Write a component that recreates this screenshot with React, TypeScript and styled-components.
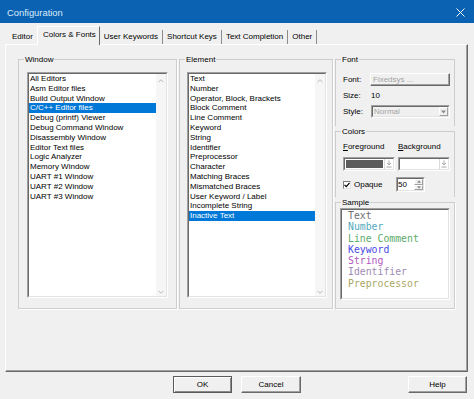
import React from "react";
import styled, { createGlobalStyle } from "styled-components";

const GlobalStyle = createGlobalStyle`
  html, body {
    margin: 0;
    padding: 0;
    background: #f0f0f0;
  }
  body {
    font-family: "Liberation Sans", Arial, sans-serif;
    font-size: 8px;
    color: #000;
  }
  * {
    box-sizing: border-box;
  }
`;

const Frame = styled.div`
  width: 474px;
  height: 399px;
  display: flex;
  flex-direction: column;
  background: #f0f0f0;
  overflow: hidden;
`;

const TitleBar = styled.div`
  height: 23px;
  flex: none;
  display: flex;
  align-items: center;
  padding: 1px 9px 0 7px;
  background: #0b62b2;
  color: #dbeafa;
  font-size: 9.4px;
`;

const TitleText = styled.span`
  flex: 1;
`;

const TabStrip = styled.div`
  height: 21px;
  flex: none;
  display: flex;
  align-items: flex-end;
  padding-left: 8px;
`;

const Tab = styled.div<{ $active?: boolean; $sep?: boolean }>`
  height: ${({ $active }) => ($active ? 19 : 14)}px;
  line-height: ${({ $active }) => ($active ? 16 : 13)}px;
  padding: ${({ $active }) => ($active ? "0 3px 0 5px" : "0 4px")};
  white-space: nowrap;
  border-right: ${({ $sep }) => ($sep ? "1px solid #8c8c8c" : "none")};
  ${({ $active }) =>
    $active &&
    `
    position: relative;
    z-index: 1;
    margin-bottom: -1px;
    background: #f0f0f0;
    border-top: 1px solid #fff;
    border-left: 1px solid #fff;
    border-right: 1px solid #696969;
  `}
`;

const Panel = styled.div`
  height: 328px;
  flex: none;
  margin: 0 6px 0 5px;
  padding: 9px 12px 0;
  display: flex;
  align-items: flex-start;
  gap: 2px;
  border: 1px solid;
  border-color: #fff #696969 #696969 #fff;
  box-shadow: inset -1px -1px 0 #a0a0a0;
`;

const Group = styled.fieldset<{ $w?: number; $open?: boolean }>`
  margin: 0;
  padding: 0;
  min-width: 0;
  width: ${({ $w }) => ($w ? `${$w}px` : "auto")};
  border: 1px solid #cdcdcd;
  border-bottom: ${({ $open }) => ($open ? "none" : "1px solid #cdcdcd")};
  box-shadow: ${({ $open }) => ($open ? "none" : "1px 1px 0 #fff")};
`;

const Legend = styled.legend`
  margin-left: 5px;
  padding: 0 1px;
  line-height: 11px;
  font-size: 8px;
`;

const GroupBody = styled.div<{ $pad: string }>`
  padding: ${({ $pad }) => $pad};
`;

const Column = styled.div`
  width: 120px;
  display: flex;
  flex-direction: column;
`;

const Sunken = styled.div<{ $h: number; $w?: number }>`
  height: ${({ $h }) => $h}px;
  width: ${({ $w }) => ($w ? `${$w}px` : "auto")};
  border: 1px solid;
  border-color: #a0a0a0 #fff #fff #a0a0a0;
`;

const Well = styled.div<{ $bg?: string }>`
  height: 100%;
  display: flex;
  border: 1px solid;
  border-color: #696969 #e3e3e3 #e3e3e3 #696969;
  background: ${({ $bg }) => $bg || "#fff"};
`;

const Items = styled.div`
  flex: 1;
  min-width: 0;
`;

const Item = styled.div<{ $sel?: boolean }>`
  height: 9.8px;
  line-height: 9.8px;
  padding-left: 1px;
  white-space: nowrap;
  background: ${({ $sel }) => ($sel ? "#0078d7" : "transparent")};
  color: ${({ $sel }) => ($sel ? "#fff" : "#000")};
`;

const ScrollCol = styled.div`
  width: 10px;
  display: flex;
  flex-direction: column;
  justify-content: space-between;
  align-items: center;
  padding: 4px 0 1px;
  background: #f6f6f6;
`;

const FontGrid = styled.div`
  display: grid;
  grid-template-columns: 28px 1fr;
  grid-auto-rows: 13px;
  row-gap: 3px;
  align-items: center;
`;

const RaisedButton = styled.div<{ $disabled?: boolean }>`
  height: 13px;
  line-height: 11px;
  padding-left: 2px;
  margin-left: -1px;
  color: ${({ $disabled }) => ($disabled ? "#a3a3a3" : "#000")};
  border: 1px solid;
  border-color: #fff #696969 #696969 #fff;
  box-shadow: inset -1px -1px 0 #a0a0a0;
`;

const SelectText = styled.span`
  flex: 1;
  line-height: 9px;
  padding-left: 1px;
  color: #a3a3a3;
`;

const SmallKnob = styled.div`
  width: 9px;
  display: flex;
  align-items: center;
  justify-content: center;
  border: 1px solid;
  border-color: #fff #a0a0a0 #a0a0a0 #fff;
  background: #f0f0f0;
`;

const PairGrid = styled.div<{ $mt: number; $h: number }>`
  display: grid;
  grid-template-columns: 52px 52px;
  column-gap: 3px;
  height: ${({ $h }) => $h}px;
  margin-top: ${({ $mt }) => $mt}px;
  align-items: center;
`;

const Swatch = styled.div<{ $color: string; $dark?: boolean }>`
  width: 37px;
  margin: 1px;
  background: ${({ $color }) => $color};
`;

const PickArrow = styled.div`
  flex: 1;
  display: flex;
  align-items: center;
  justify-content: center;
  border-left: 1px solid #dadada;
`;

const OpaqueRow = styled.div`
  display: flex;
  align-items: center;
  height: 15px;
  margin-top: 6px;
`;

const CheckBox = styled.div`
  width: 8px;
  height: 8px;
  display: flex;
  align-items: center;
  justify-content: center;
  background: #fff;
  border: 1px solid;
  border-color: #808080 #e3e3e3 #e3e3e3 #808080;
`;

const CheckLabel = styled.span`
  margin-left: 3px;
  width: 42px;
`;

const SpinText = styled.span`
  flex: 1;
  line-height: 11px;
`;

const SpinButtons = styled.div`
  width: 9px;
  display: flex;
  flex-direction: column;
`;

const SpinHalf = styled.div`
  flex: 1;
  display: flex;
  align-items: center;
  justify-content: center;
  background: #f0f0f0;
  border: 1px solid;
  border-color: #fff #a0a0a0 #a0a0a0 #fff;
`;

const SampleLines = styled.div`
  padding-left: 6px;
  font-family: "DejaVu Sans Mono", "Liberation Mono", monospace;
  font-size: 9.8px;
`;

const SampleLine = styled.div<{ $color: string }>`
  height: 11.3px;
  line-height: 11.3px;
  color: ${({ $color }) => $color};
  white-space: nowrap;
`;

const ButtonRow = styled.div`
  display: flex;
  margin-top: 4px;
  padding: 0 7px 0 173px;
  gap: 9px;
`;

const DialogButton = styled.div<{ $default?: boolean; $w: number; $push?: boolean }>`
  width: ${({ $w }) => $w}px;
  height: 17px;
  display: flex;
  align-items: center;
  justify-content: center;
  margin-left: ${({ $push }) => ($push ? "auto" : "0")};
  border: 1px solid;
  border-color: ${({ $default }) =>
    $default ? "#5a5a5a" : "#fff #696969 #696969 #fff"};
  box-shadow: ${({ $default }) =>
    $default
      ? "inset 1px 1px 0 #fff, inset -1px -1px 0 #8a8a8a"
      : "inset -1px -1px 0 #a0a0a0"};
`;

const windows = [
  "All Editors",
  "Asm Editor files",
  "Build Output Window",
  "C/C++ Editor files",
  "Debug (printf) Viewer",
  "Debug Command Window",
  "Disassembly Window",
  "Editor Text files",
  "Logic Analyzer",
  "Memory Window",
  "UART #1 Window",
  "UART #2 Window",
  "UART #3 Window",
];

const elements = [
  "Text",
  "Number",
  "Operator, Block, Brackets",
  "Block Comment",
  "Line Comment",
  "Keyword",
  "String",
  "Identifier",
  "Preprocessor",
  "Character",
  "Matching Braces",
  "Mismatched Braces",
  "User Keyword / Label",
  "Incomplete String",
  "Inactive Text",
];

const samples: [string, string][] = [
  ["Text", "#6e6e6e"],
  ["Number", "#52a9bb"],
  ["Line Comment", "#5aab68"],
  ["Keyword", "#4a4ae6"],
  ["String", "#b158c2"],
  ["Identifier", "#9e8cb4"],
  ["Preprocessor", "#a9a764"],
];

const tabs = ["Editor", "Colors & Fonts", "User Keywords", "Shortcut Keys", "Text Completion", "Other"];

const Chevron = ({ up }: { up?: boolean }) => (
  <svg width="6" height="6" viewBox="0 0 6 6">
    <path
      d={up ? "M0.5 4.2 L3 1.7 L5.5 4.2" : "M0.5 1.8 L3 4.3 L5.5 1.8"}
      fill="none"
      stroke="#b8b8b8"
      strokeWidth="1"
    />
  </svg>
);

const DropGlyph = () => (
  <svg width="6" height="8" viewBox="0 0 6 8">
    <path d="M3 0.5 V5 M1 3 L3 5 L5 3 M0.5 7 H5.5" fill="none" stroke="#a8a8a8" strokeWidth="1" />
  </svg>
);

const Triangle = ({ up, size = 5 }: { up?: boolean; size?: number }) => (
  <svg width={size} height={Math.ceil(size / 2) + 1} viewBox="0 0 5 3">
    <path d={up ? "M0 3 L2.5 0 L5 3 Z" : "M0 0 L5 0 L2.5 3 Z"} fill="#8a8a8a" />
  </svg>
);

const ListBox = ({ items, selected, h }: { items: string[]; selected: number; h: number }) => (
  <Sunken $h={h}>
    <Well>
      <Items>
        {items.map((it, i) => (
          <Item key={it} $sel={i === selected}>
            {it}
          </Item>
        ))}
      </Items>
      <ScrollCol>
        <Chevron up />
        <Chevron />
      </ScrollCol>
    </Well>
  </Sunken>
);

const App = () => {
  return (
    <Frame>
      <GlobalStyle />
      <TitleBar>
        <TitleText>Configuration</TitleText>
        <svg width="9" height="9" viewBox="0 0 9 9">
          <path d="M0.5 0.5 L8.5 8.5 M8.5 0.5 L0.5 8.5" stroke="#f4f8fc" strokeWidth="1" />
        </svg>
      </TitleBar>

      <TabStrip>
        {tabs.map((t, i) => (
          <Tab key={t} $active={i === 1} $sep={i > 1}>
            {t}
          </Tab>
        ))}
      </TabStrip>

      <Panel>
        <Group $w={159}>
          <Legend>Window</Legend>
          <GroupBody $pad="7px 8px 10px 8px">
            <ListBox items={windows} selected={3} h={226} />
          </GroupBody>
        </Group>

        <Group $w={154}>
          <Legend>Element</Legend>
          <GroupBody $pad="7px 5px 10px 7px">
            <ListBox items={elements} selected={14} h={226} />
          </GroupBody>
        </Group>

        <Column>
          <Group $open>
            <Legend>Font</Legend>
            <GroupBody $pad="8px 4px 8px 7px">
              <FontGrid>
                <span>Font:</span>
                <RaisedButton $disabled>Fixedsys ...</RaisedButton>
                <span>Size:</span>
                <span>10</span>
                <span>Style:</span>
                <Sunken $h={13}>
                  <Well $bg="#f0f0f0">
                    <SelectText>Normal</SelectText>
                    <SmallKnob>
                      <Triangle />
                    </SmallKnob>
                  </Well>
                </Sunken>
              </FontGrid>
            </GroupBody>
          </Group>

          <Group $open>
            <Legend>Colors</Legend>
            <GroupBody $pad="4px 4px 5px 7px">
              <PairGrid $mt={0} $h={11}>
                <span>
                  <u>F</u>oreground
                </span>
                <span>
                  <u>B</u>ackground
                </span>
              </PairGrid>
              <PairGrid $mt={5} $h={14}>
                <Sunken $h={14}>
                  <Well>
                    <Swatch $color="#5c5c5c" />
                    <PickArrow>
                      <DropGlyph />
                    </PickArrow>
                  </Well>
                </Sunken>
                <Sunken $h={14}>
                  <Well>
                    <Swatch $color="#ffffff" />
                    <PickArrow>
                      <DropGlyph />
                    </PickArrow>
                  </Well>
                </Sunken>
              </PairGrid>
              <OpaqueRow>
                <CheckBox>
                  <svg width="6" height="6" viewBox="0 0 6 6">
                    <path d="M0.5 2.8 L2.3 4.7 L5.5 0.8" fill="none" stroke="#000" strokeWidth="1.2" />
                  </svg>
                </CheckBox>
                <CheckLabel>Opaque</CheckLabel>
                <Sunken $h={15} $w={29}>
                  <Well>
                    <SpinText>50</SpinText>
                    <SpinButtons>
                      <SpinHalf>
                        <Triangle up size={4} />
                      </SpinHalf>
                      <SpinHalf>
                        <Triangle size={4} />
                      </SpinHalf>
                    </SpinButtons>
                  </Well>
                </Sunken>
              </OpaqueRow>
            </GroupBody>
          </Group>

          <Group>
            <Legend>Sample</Legend>
            <GroupBody $pad="0 4px 8px 4px">
              <Sunken $h={92}>
                <Well>
                  <SampleLines>
                    {samples.map(([label, color]) => (
                      <SampleLine key={label} $color={color}>
                        {label}
                      </SampleLine>
                    ))}
                  </SampleLines>
                </Well>
              </Sunken>
            </GroupBody>
          </Group>
        </Column>
      </Panel>

      <ButtonRow>
        <DialogButton $default $w={59}>
          OK
        </DialogButton>
        <DialogButton $w={60}>Cancel</DialogButton>
        <DialogButton $w={59} $push>
          Help
        </DialogButton>
      </ButtonRow>
    </Frame>
  );
};

export default App;
